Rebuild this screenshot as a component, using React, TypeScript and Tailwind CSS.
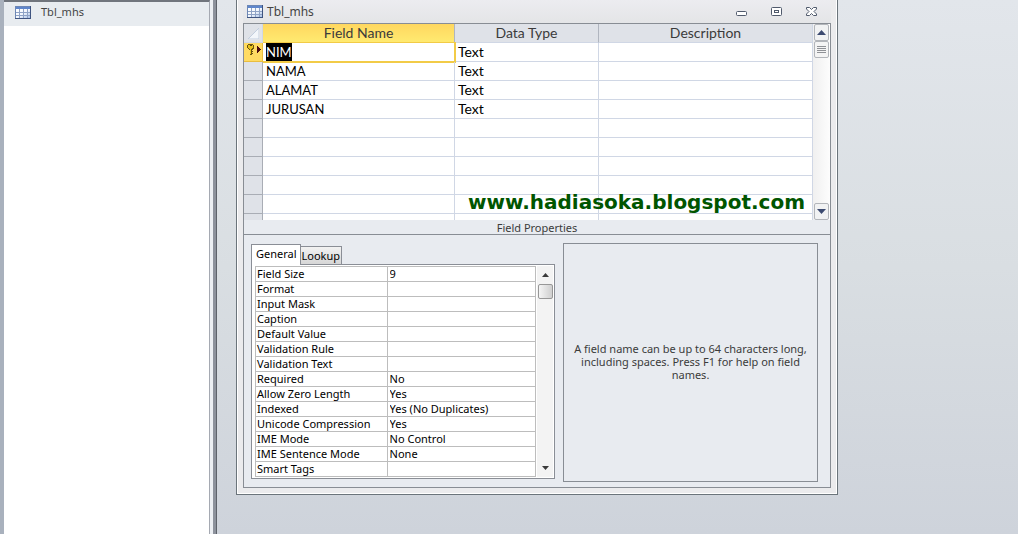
import React from "react";

const fields = [
  { name: "NIM", type: "Text" },
  { name: "NAMA", type: "Text" },
  { name: "ALAMAT", type: "Text" },
  { name: "JURUSAN", type: "Text" },
  { name: "", type: "" },
  { name: "", type: "" },
  { name: "", type: "" },
  { name: "", type: "" },
  { name: "", type: "" },
  { name: "", type: "" },
];

const properties = [
  { label: "Field Size", value: "9" },
  { label: "Format", value: "" },
  { label: "Input Mask", value: "" },
  { label: "Caption", value: "" },
  { label: "Default Value", value: "" },
  { label: "Validation Rule", value: "" },
  { label: "Validation Text", value: "" },
  { label: "Required", value: "No" },
  { label: "Allow Zero Length", value: "Yes" },
  { label: "Indexed", value: "Yes (No Duplicates)" },
  { label: "Unicode Compression", value: "Yes" },
  { label: "IME Mode", value: "No Control" },
  { label: "IME Sentence Mode", value: "None" },
  { label: "Smart Tags", value: "" },
];

const TableIcon = () => (
  <svg width="16" height="13" viewBox="0 0 16 13" shapeRendering="crispEdges">
    <defs>
      <linearGradient id="tableCells" x1="0" y1="0" x2="1" y2="1">
        <stop offset="0" stopColor="#ffffff" />
        <stop offset="0.5" stopColor="#f3f7fd" />
        <stop offset="1" stopColor="#a9c1e6" />
      </linearGradient>
    </defs>
    <rect width="16" height="13" fill="#6d87b5" />
    <rect x="1" y="3" width="14" height="9" fill="url(#tableCells)" />
    <rect x="1" y="1" width="14" height="2" fill="#5f86cc" />
    <path
      d="M1 6.500h14M1 9.500h14M4.500 3v9M8.500 3v9M12.500 3v9"
      stroke="#8fa3c6"
      strokeWidth="1"
    />
    <path d="M0 12.5h16M15.5 0v13" stroke="#3f5480" />
  </svg>
);

const KeyIcon = () => (
  <svg width="15" height="12" viewBox="0 0 15 12" shapeRendering="crispEdges">
    <path
      d="M1 0h5v1h1v4h-1v1h-1v1h1v1h-1v1h1v1h-1v1h-2v-5h-1v-1h-1v-1h-1v-3h1z"
      fill="#6b5410"
    />
    <path d="M1 1h5v3h-1v1h-1v5h-1v-5h-1v-1h-1z" fill="#e8c21c" />
    <path d="M3 1h2v1h-2z" fill="#5c4708" />
    <path d="M10 2h1v1h1v1h1v1h1v1h-1v1h-1v1h-1v1h-1z" fill="#4a0a12" />
  </svg>
);

const Arrow = ({ down = false }: { down?: boolean }) => (
  <svg width="9" height="5" viewBox="0 0 9 5">
    <path d={down ? "M0 0h9L4.500 5z" : "M0 5h9L4.500 0z"} fill="#3c4a70" />
  </svg>
);

const SmallArrow = ({ down = false }: { down?: boolean }) => (
  <svg width="7" height="4" viewBox="0 0 7 4">
    <path d={down ? "M0 0h7L3.500 4z" : "M0 4h7L3.500 0z"} fill="#3a3a3a" />
  </svg>
);

const WindowButtons = () => (
  <div className="flex items-center gap-6 pr-[14px]">
    <button aria-label="Minimize" className="flex">
      <svg width="11" height="11" viewBox="0 0 11 11">
        <rect x="0.5" y="5.500" width="10" height="4" rx="1" fill="#fff" stroke="#505a6c" />
      </svg>
    </button>
    <button aria-label="Restore" className="flex">
      <svg width="11" height="9" viewBox="0 0 11 9">
        <rect x="0.5" y="0.5" width="10" height="8" rx="1" fill="#fff" stroke="#505a6c" />
        <rect x="3.500" y="3.500" width="4" height="2" fill="#fff" stroke="#505a6c" />
      </svg>
    </button>
    <button aria-label="Close" className="flex">
      <svg width="11" height="9" viewBox="0 0 11 9">
        <path
          d="M0.500 0.500h3l2 2l2-2h3v1.500l-2.500 2.500l2.500 2.500v1.500h-3l-2-2l-2 2h-3v-1.500l2.500-2.500l-2.500-2.500z"
          fill="#fff"
          stroke="#505a6c"
        />
      </svg>
    </button>
  </div>
);

const FieldGrid = () => (
  <div className="flex h-[196px]">
    <div className="relative min-w-0 flex-1 overflow-hidden bg-white">
      <table className="w-full table-fixed border-separate border-spacing-0 font-[Lato,sans-serif] text-[13px] leading-[18px] text-black">
        <colgroup>
          <col className="w-[19px]" />
          <col className="w-[192px]" />
          <col className="w-36" />
          <col />
        </colgroup>
        <thead>
          <tr className="h-[19px] bg-[#dfe2e8] text-[14px] text-[#3b3b3b]">
            <th className="border-r border-b border-[#d0d7e5] p-0">
              <svg width="11" height="11" viewBox="0 0 11 11" className="ml-1">
                <path d="M11 0v11H0z" fill="#f3f6fa" stroke="#c3cede" />
              </svg>
            </th>
            <th className="border-r border-b border-r-[#b0b5bf] border-b-[#f2cb47] bg-linear-to-b from-[#ffd75f] to-[#ffea70] p-0 font-normal">
              Field Name
            </th>
            <th className="border-r border-b border-r-[#b0b5bf] border-b-[#d0d7e5] p-0 font-normal">
              Data Type
            </th>
            <th className="border-r border-b border-[#d0d7e5] p-0 font-normal">
              Description
            </th>
          </tr>
        </thead>
        <tbody>
          {fields.map((field, index) => (
            <tr key={index} className="h-[19px]">
              <td
                className={`border-r border-b p-0 ${
                  index === 0
                    ? "border-[#e9bd3f] bg-[#ffdb63]"
                    : "border-[#a9adb5] bg-[#dfe2e8]"
                }`}
              >
                {index === 0 && (
                  <div className="flex pb-1 pl-[3px]">
                    <KeyIcon />
                  </div>
                )}
              </td>
              <td className="relative border-r border-b border-[#d0d7e5] py-0 pl-[3px]">
                {index === 0 ? (
                  <>
                    <span className="block w-fit bg-black text-white">
                      {field.name}
                    </span>
                    <span className="absolute -top-px -right-[2px] -bottom-[2px] left-0 border-t border-r-2 border-b-2 border-[#f2cb47]" />
                  </>
                ) : (
                  field.name
                )}
              </td>
              <td className="border-r border-b border-[#d0d7e5] py-0 pl-[3px] text-[14px]">
                {field.type}
              </td>
              <td className="border-r border-b border-[#d0d7e5] p-0" />
            </tr>
          ))}
        </tbody>
      </table>
      <a
        href="#"
        className="absolute right-2 bottom-1 font-['DejaVu_Sans',sans-serif] text-[20px] leading-7 font-bold text-[#005500]"
      >
        www.hadiasoka.blogspot.com
      </a>
    </div>
    <div className="flex w-[17px] flex-col items-center bg-linear-to-r from-[#f0f0f0] to-[#fdfdfd]">
      <button
        aria-label="Scroll up"
        className="flex h-[17px] w-[15px] items-center justify-center rounded-xs border border-[#b2b5ba] bg-[#f1f2f3]"
      >
        <Arrow />
      </button>
      <button
        aria-label="Scroll thumb"
        className="flex h-[17px] w-[15px] items-center justify-center rounded-xs border border-[#b2b5ba] bg-[#f4f4f4]"
      >
        <svg width="9" height="7" viewBox="0 0 9 7" shapeRendering="crispEdges">
          <path d="M0 0.500h9M0 2.500h9M0 4.500h9M0 6.500h9" stroke="#8f9196" />
        </svg>
      </button>
      <button
        aria-label="Scroll down"
        className="mt-auto flex h-[17px] w-[15px] items-center justify-center rounded-xs border border-[#b2b5ba] bg-[#f1f2f3]"
      >
        <Arrow down />
      </button>
    </div>
  </div>
);

const PropertySheet = () => (
  <div className="min-w-0 flex-1">
    <div className="flex items-end pr-2">
      <button className="z-10 -mb-px h-[21px] border border-b-0 border-[#8a8e96] bg-white pr-[3px] pb-[2px] pl-1 leading-4">
        General
      </button>
      <button className="h-[18px] border border-b-0 border-l-0 border-[#8a8e96] bg-linear-to-b from-[#f2f2f2] to-[#d6d6d6] px-[1px] leading-4">
        Lookup
      </button>
    </div>
    <div className="flex border border-[#8a8e96] bg-white p-px pl-[3px]">
      <table className="min-w-0 flex-1 table-fixed border-collapse">
        <colgroup>
          <col className="w-[47%]" />
          <col />
        </colgroup>
        <tbody>
          {properties.map((property, index) => (
            <tr key={property.label} className="h-[15px]">
              <td className="border border-[#bdbdbd] py-0 pl-px whitespace-nowrap">
                <label htmlFor={`property-${index}`} className="block leading-[14px]">
                  {property.label}
                </label>
              </td>
              <td className="border border-[#bdbdbd] py-0 pl-[2px]">
                <input
                  id={`property-${index}`}
                  defaultValue={property.value}
                  className="block h-[14px] w-full leading-[14px] outline-none"
                />
              </td>
            </tr>
          ))}
        </tbody>
      </table>
      <div className="ml-px flex w-4 flex-col items-center justify-between bg-[#f3f3f3]">
        <div className="flex flex-col items-center">
          <button aria-label="Previous property" className="flex h-[18px] items-center">
            <SmallArrow />
          </button>
          <button
            aria-label="Property scroll thumb"
            className="h-[15px] w-[15px] rounded-xs border border-[#979797] bg-linear-to-r from-[#f5f5f5] to-[#cfcfcf]"
          />
        </div>
        <button aria-label="Next property" className="flex h-[18px] items-center">
          <SmallArrow down />
        </button>
      </div>
    </div>
  </div>
);

const DesignWindow = () => (
  <section className="border border-t-0 border-[#6b747b] bg-white px-px pb-px">
    <div className="bg-[#ebebed] px-[5px] pb-[5px]">
      <header className="flex h-[23px] items-center justify-between bg-linear-to-b from-[#ececf0] to-[#e4e5e7]">
        <div className="flex items-center gap-1 pl-1 text-[12px] text-[#444]">
          <TableIcon />
          <h1>Tbl_mhs</h1>
        </div>
        <WindowButtons />
      </header>
      <div className="border border-[#888d94] bg-[#e8ebf0]">
        <FieldGrid />
        <h2 className="border-b border-[#888d94] pt-px text-center leading-[13px] text-[#3b3b3b]">
          Field Properties
        </h2>
        <div className="flex gap-2 pt-2 pr-3 pb-[5px] pl-[7px]">
          <div className="flex min-w-0 flex-[304] pt-px pb-[3px]">
            <PropertySheet />
          </div>
          <div className="flex min-w-0 flex-[237] items-center justify-center border border-[#888d94] px-2 pb-[2px] text-center leading-[13px] text-[#3b3b3b]">
            A field name can be up to 64 characters long, including spaces.
            Press F1 for help on field names.
          </div>
        </div>
      </div>
    </div>
  </section>
);

const App = () => {
  return (
    <div className="flex min-h-screen bg-[#eceff3] font-['Noto_Sans',sans-serif] text-[11px] text-black">
      <nav className="flex w-[217px] shrink-0 border-r border-[#5d626a]">
        <div className="w-1 bg-[#a9b1bd]" />
        <div className="flex-1 border-t-2 border-r border-t-[#70757d] border-r-[#a5a9b2] bg-white">
          <a
            href="#"
            className="flex h-6 items-center gap-[10px] bg-[#e8ecf0] pb-[3px] pl-[11px] text-[#444]"
          >
            <TableIcon />
            Tbl_mhs
          </a>
        </div>
        <div className="w-[3px] bg-[#eceff3]" />
        <div className="w-[3px] bg-[#8d929c]" />
      </nav>
      <main className="min-w-0 flex-1 bg-linear-to-b from-[#e2e6eb] via-[#d9dee2] via-50% to-[#ced3db] pr-[180px] pl-[19px]">
        <DesignWindow />
      </main>
    </div>
  );
};

export default App;
